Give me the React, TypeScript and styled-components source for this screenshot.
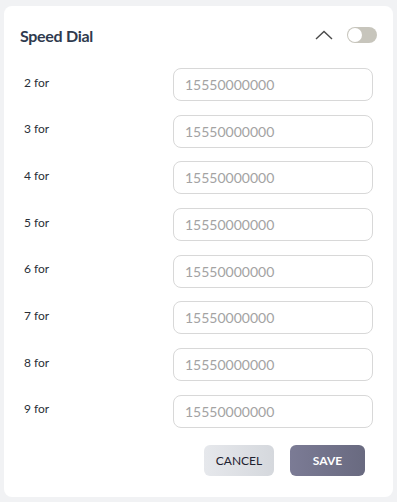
import React from "react";
import styled, { createGlobalStyle } from "styled-components";

const Global = createGlobalStyle`
  html, body { margin: 0; padding: 0; background: #f1f2f4; }
  body { font-family: Lato, "Noto Sans", sans-serif; }
  * { box-sizing: border-box; }
`;

const Page = styled.div`
  padding: 6px 4px 5px 4px;
`;

const Card = styled.div`
  background: #ffffff;
  border-radius: 8px;
  height: 491px;
  width: 389px;
  display: flex;
  flex-direction: column;
`;

const Header = styled.div`
  display: flex;
  align-items: center;
  justify-content: space-between;
  padding: 8px 16px 0 16px;
  height: 50px;
`;

const Title = styled.h2`
  margin: 0;
  font-size: 16px;
  font-weight: 700;
  color: #2f3a4e;
  letter-spacing: -0.3px;
`;

const Controls = styled.div`
  display: flex;
  align-items: center;
  gap: 14px;
`;

const Toggle = styled.div`
  width: 30px;
  height: 16px;
  border-radius: 8px;
  background: #c7c5bc;
  position: relative;
`;

const Knob = styled.div`
  position: absolute;
  left: 1px;
  top: 1px;
  width: 14px;
  height: 14px;
  border-radius: 50%;
  background: #ffffff;
`;

const List = styled.div`
  display: flex;
  flex-direction: column;
  gap: 13.7px;
  padding: 12px 20px 0 20px;
`;

const Row = styled.div`
  display: flex;
  align-items: center;
  justify-content: space-between;
`;

const Label = styled.label`
  font-size: 12px;
  color: #2a2f38;
  margin-top: -5px;
`;

const Input = styled.input`
  width: 200px;
  height: 33px;
  border: 1px solid #d8d8d8;
  border-radius: 8px;
  padding: 0 11px;
  font-family: Lato, "Noto Sans", sans-serif;
  font-size: 14px;
  color: #333;
  outline: none;
  &::placeholder { color: #a3a3a3; }
`;

const Footer = styled.div`
  display: flex;
  justify-content: flex-end;
  gap: 16px;
  padding: 17px 28px 0 0;
`;

const Button = styled.button<{ $primary?: boolean }>`
  height: 31px;
  width: ${(p) => (p.$primary ? "75px" : "70px")};
  border: none;
  border-radius: 6px;
  font-family: Lato, "Noto Sans", sans-serif;
  font-size: 12px;
  font-weight: ${(p) => (p.$primary ? 700 : 400)};
  color: ${(p) => (p.$primary ? "#ffffff" : "#1e2230")};
  background: ${(p) =>
    p.$primary
      ? "linear-gradient(90deg, #7b7b95 0%, #696a80 100%)"
      : "linear-gradient(90deg, #e6e8ec 0%, #d5d8dd 100%)"};
`;

const keys = [2, 3, 4, 5, 6, 7, 8, 9];

export default function App() {
  return (
    <>
      <Global />
      <Page>
        <Card>
          <Header>
            <Title>Speed Dial</Title>
            <Controls>
              <svg width="18" height="10" viewBox="0 0 18 10" fill="none">
                <path d="M1 9 L9 1.5 L17 9" stroke="#4a4a4a" strokeWidth="1.4" />
              </svg>
              <Toggle>
                <Knob />
              </Toggle>
            </Controls>
          </Header>
          <List>
            {keys.map((k) => (
              <Row key={k}>
                <Label>{k} for</Label>
                <Input placeholder="15550000000" />
              </Row>
            ))}
          </List>
          <Footer>
            <Button>CANCEL</Button>
            <Button $primary>SAVE</Button>
          </Footer>
        </Card>
      </Page>
    </>
  );
}
